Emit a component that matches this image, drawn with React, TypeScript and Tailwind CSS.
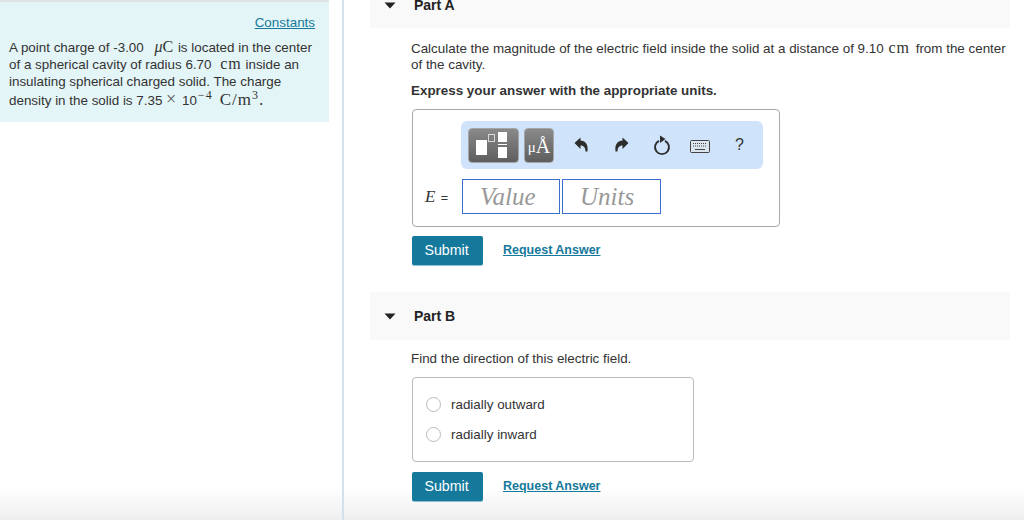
import React from 'react'

const SANS = "font-['Liberation_Sans',Arial,sans-serif]"
const SERIF = "font-['Liberation_Serif','DejaVu_Serif',serif]"

function Caret() {
  return (
    <svg width="12" height="7" viewBox="0 0 12 7" className="shrink-0">
      <path d="M0.5 0.5h11L6 6.5z" fill="#222" />
    </svg>
  )
}

function PartHeader({ label, className }: { label: string; className: string }) {
  return (
    <div className={`flex items-center bg-[#f9f9f9] pl-[14px] ${className}`}>
      <Caret />
      <span className="ml-[18px] text-[14px] font-bold text-[#222]">{label}</span>
    </div>
  )
}

function SubmitRow({ className }: { className: string }) {
  return (
    <div className={`flex items-center ${className}`}>
      <button className="w-[71px] h-[29px] pr-[2px] rounded-[2px] bg-[#14799b] text-white text-[14.2px] shadow-[0_1px_0_#8fc0d0]">Submit</button>
      <a className="ml-[20px] text-[12.5px] font-bold text-[#14799b] underline">Request Answer</a>
    </div>
  )
}

// MathJax-looking inline units
function Unit({ children, className }: { children: React.ReactNode; className: string }) {
  return <span className={`${SERIF} text-[16px] leading-none tracking-[1px] ${className}`}>{children}</span>
}

function Toolbar() {
  return (
    <div className="flex items-center h-[48px] w-[302px] ml-[48px] rounded-[6px] bg-[#cfe4fb]">
      {/* template button */}
      <div className="relative ml-[7px] w-[51px] h-[35px] rounded-[4px] border border-[#a5a5a5] bg-gradient-to-b from-[#8a8a8a] to-[#5e5e5e]">
        <div className="absolute left-[7px] top-[11px] w-[11px] h-[15px] bg-white" />
        <div className="absolute left-[19px] top-[5px] w-[7px] h-[8px] border border-white opacity-70" />
        <div className="absolute left-[29px] top-[3px] w-[9px] h-[10px] bg-white" />
        <div className="absolute left-[29px] top-[15px] w-[9px] h-[1px] bg-white" />
        <div className="absolute left-[29px] top-[18px] w-[9px] h-[11px] bg-white" />
      </div>
      {/* units button */}
      <div className={`ml-[5px] flex items-end justify-center pb-[7px] w-[30px] h-[35px] rounded-[4px] border border-[#a5a5a5] bg-gradient-to-b from-[#8a8a8a] to-[#5e5e5e] text-white leading-none ${SERIF}`}>
        <span className="text-[15px]">μ</span>
        <span className="text-[20px] leading-[18px]">Å</span>
      </div>
      <svg width="15" height="16" viewBox="0 0 15 16" className="ml-[20px]">
        <path d="M0.5 6 6.500 0.500v3c4.500 0 8 3.500 7 11h-2c0-3.500-1.500-6-5-6v3.500z" fill="#2d2d2d" />
      </svg>
      <svg width="15" height="16" viewBox="0 0 15 16" className="ml-[25px]">
        <path d="M14.500 6 8.500 0.500v3c-4.500 0-8 3.500-7 11h2c0-3.500 1.500-6 5-6v3.500z" fill="#2d2d2d" />
      </svg>
      <svg width="18" height="22" viewBox="0 0 18 22" className="ml-[24px] mt-[1px]">
        <path d="M6 5.800a7 7 0 1 0 6 0" fill="none" stroke="#2d2d2d" strokeWidth="1.900" />
        <path d="M7 0.500v7.500L12.500 4z" fill="#2d2d2d" />
      </svg>
      <svg width="20" height="13" viewBox="0 0 20 13" className="ml-[19px] mt-[3px]">
        <rect x="0.5" y="0.5" width="19" height="12" rx="1" fill="#dbe6ef" stroke="#444" />
        <path d="M3 3.500h14M3 6h14" stroke="#444" strokeDasharray="1 1" />
        <path d="M5 9.500h10" stroke="#444" />
      </svg>
      <span className="ml-[25px] text-[16px] text-[#333]">?</span>
    </div>
  )
}

function AnswerField({ placeholder, className }: { placeholder: string; className: string }) {
  return (
    <div className={`flex items-center pl-[17px] h-[35px] border border-[#3a6fd0] text-[25px] italic text-[#999] ${SERIF} ${className}`}>
      {placeholder}
    </div>
  )
}

function RadioRow({ label }: { label: string }) {
  return (
    <div className="flex items-center h-[30px]">
      <span className="w-[15px] h-[15px] -mt-[2px] rounded-full border border-[#bbb] bg-white" />
      <span className="ml-[10px] text-[13.4px] text-[#333]">{label}</span>
    </div>
  )
}

export default function App() {
  return (
    <div className={`flex w-[1024px] h-[520px] overflow-hidden bg-gradient-to-b from-white from-[94%] to-[#eeeeee] text-[#333] ${SANS}`}>
      {/* ── Left column ─────────────────────────── */}
      <div className="w-[344px] shrink-0 border-r-2 border-[#d3e0ee]">
        <div className="w-[329px] h-[122px] bg-[#e4f5f7] border-t-2 border-[#dfe3e6] pl-[9px] pr-[14px]">
          <div className="mt-[13px] text-right text-[13.4px] leading-[16px]">
            <a className="text-[#14799b] underline">Constants</a>
          </div>
          <p className="mt-[8px] text-[13.4px] leading-[17px] whitespace-nowrap">
            A point charge of -3.00 <span className={`${SERIF} text-[16px] leading-none ml-[7px] mr-[1px]`}><i>μ</i>C</span> is located in the center<br />
            of a spherical cavity of radius 6.70 <Unit className="ml-[5px]">cm</Unit> inside an<br />
            insulating spherical charged solid. The charge<br />
            density in the solid is 7.35 <span className={`${SERIF} text-[18px] leading-none text-[#555]`}>×</span> <span className="ml-[2px]">10</span><span className={`${SERIF} relative -top-[6px] ml-[1px] text-[12px] leading-none tracking-[1px]`}>−4</span>
            <span className={`${SERIF} text-[17px] tracking-[1px] leading-none ml-[7px]`}>C/m<span className="relative -top-[6px] text-[12px]">3</span>.</span>
          </p>
        </div>
      </div>

      {/* ── Right column ────────────────────────── */}
      <div className="ml-[26px] w-[640px] shrink-0">
        <PartHeader label="Part A" className="h-[28px] pb-[18px]" />
        <div className="pl-[42px]">
          <p className="mt-[12px] -ml-[1px] text-[13.4px] leading-[16px] whitespace-nowrap">
            Calculate the magnitude of the electric field inside the solid at a distance of 9.10 <Unit className="ml-[1px] mr-[2px]">cm</Unit> from the center<br />of the cavity.
          </p>
          <p className="mt-[10px] -ml-[1px] text-[13.4px] leading-[16px] font-bold">Express your answer with the appropriate units.</p>
          <div className="mt-[10px] w-[368px] h-[118px] pt-[11px] rounded-[4px] border border-[#aaa]">
            <Toolbar />
            <div className="flex items-center mt-[10px] pl-[12px]">
              <span className="w-[37px] text-[12.5px]"><i className={`${SERIF} text-[17px] mr-[2px]`}>E</i> =</span>
              <AnswerField placeholder="Value" className="w-[98px]" />
              <div className="w-[2px]" />
              <AnswerField placeholder="Units" className="w-[99px]" />
            </div>
          </div>
          <SubmitRow className="mt-[9px]" />
        </div>
        <PartHeader label="Part B" className="mt-[27px] h-[48px]" />
        <div className="pl-[42px]">
          <p className="mt-[11px] -ml-[1px] text-[13.4px] leading-[16px]">Find the direction of this electric field.</p>
          <div className="mt-[10px] w-[282px] h-[85px] pt-[12px] pl-[13px] rounded-[4px] border border-[#bbb]">
            <RadioRow label="radially outward" />
            <RadioRow label="radially inward" />
          </div>
          <SubmitRow className="mt-[10px]" />
        </div>
      </div>
    </div>
  )
}
